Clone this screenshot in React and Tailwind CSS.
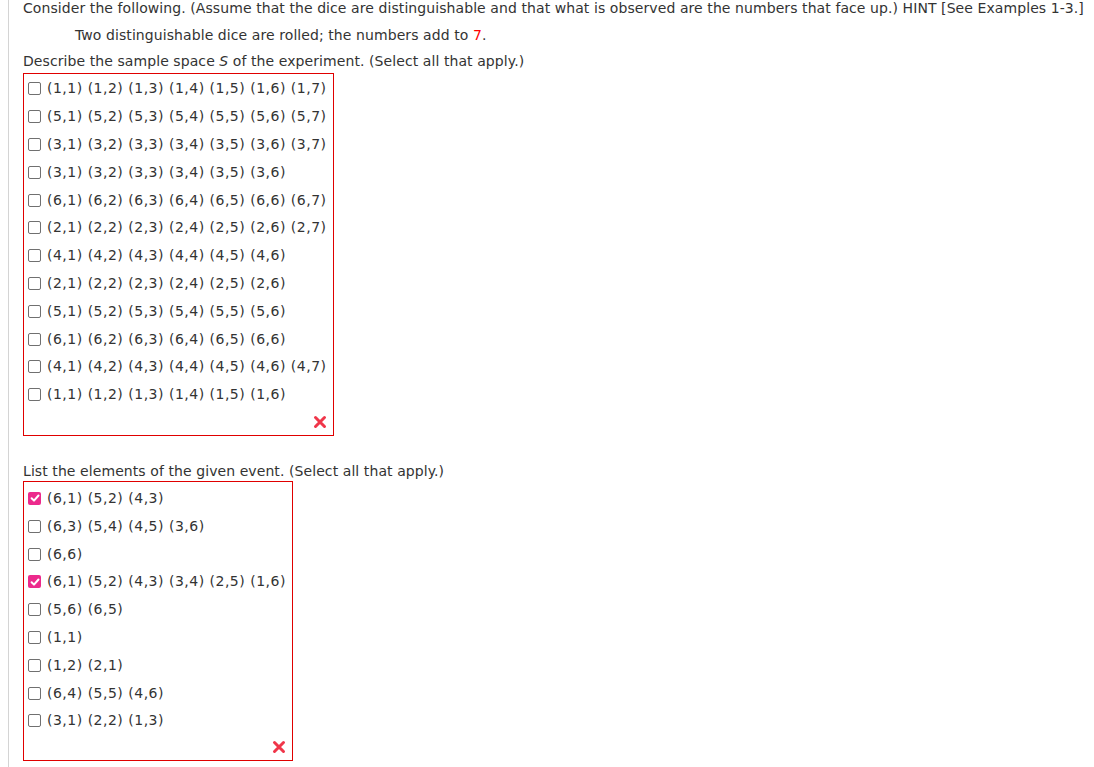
import React from 'react';

const sampleRows = [
    '(1,1) (1,2) (1,3) (1,4) (1,5) (1,6) (1,7)',
    '(5,1) (5,2) (5,3) (5,4) (5,5) (5,6) (5,7)',
    '(3,1) (3,2) (3,3) (3,4) (3,5) (3,6) (3,7)',
    '(3,1) (3,2) (3,3) (3,4) (3,5) (3,6)',
    '(6,1) (6,2) (6,3) (6,4) (6,5) (6,6) (6,7)',
    '(2,1) (2,2) (2,3) (2,4) (2,5) (2,6) (2,7)',
    '(4,1) (4,2) (4,3) (4,4) (4,5) (4,6)',
    '(2,1) (2,2) (2,3) (2,4) (2,5) (2,6)',
    '(5,1) (5,2) (5,3) (5,4) (5,5) (5,6)',
    '(6,1) (6,2) (6,3) (6,4) (6,5) (6,6)',
    '(4,1) (4,2) (4,3) (4,4) (4,5) (4,6) (4,7)',
    '(1,1) (1,2) (1,3) (1,4) (1,5) (1,6)',
];

const eventRows = [
    { text: '(6,1) (5,2) (4,3)', checked: true },
    { text: '(6,3) (5,4) (4,5) (3,6)', checked: false },
    { text: '(6,6)', checked: false },
    { text: '(6,1) (5,2) (4,3) (3,4) (2,5) (1,6)', checked: true },
    { text: '(5,6) (6,5)', checked: false },
    { text: '(1,1)', checked: false },
    { text: '(1,2) (2,1)', checked: false },
    { text: '(6,4) (5,5) (4,6)', checked: false },
    { text: '(3,1) (2,2) (1,3)', checked: false },
];

const Box = ({ checked }) =>
    checked ? (
        <span className="w-[13px] h-[13px] rounded-[2px] bg-[#ec2a8c] flex items-center justify-center shrink-0">
            <svg width="10" height="10" viewBox="0 0 10 10">
                <path d="M1.6 5.3 L4 7.6 L8.5 2.5" fill="none" stroke="#fff" strokeWidth="2" strokeLinecap="round" strokeLinejoin="round" />
            </svg>
        </span>
    ) : (
        <span className="w-[13px] h-[13px] rounded-[2px] border border-[#707070] bg-white shrink-0" />
    );

const WrongMark = () => (
    <svg width="14" height="14" viewBox="0 0 14 14">
        <path d="M2.5 2.5 L11.5 11.5 M11.5 2.5 L2.5 11.5" stroke="#f0364a" strokeWidth="3" strokeLinecap="round" />
    </svg>
);

const Option = ({ text, checked }) => (
    <div className="h-[27.8px] flex items-center gap-[6px] pl-[4px]">
        <Box checked={checked} />
        <span className="whitespace-nowrap tracking-[0.5px]">{text}</span>
    </div>
);

export default function App() {
    return (
        <div className="min-h-[767px] bg-white text-[#333] text-[14px] leading-[17px] font-['DejaVu_Sans','Verdana',sans-serif]">
            <div className="ml-[8px] border-l border-[#d4d4d4] min-h-[767px] pl-[14px]">
                <p className="tracking-[0.08px]">
                    Consider the following. (Assume that the dice are distinguishable and that what is observed are the numbers that face up.) HINT [See Examples 1-3.]
                </p>
                <p className="mt-[10px] pl-[52px] tracking-[0.08px]">
                    Two distinguishable dice are rolled; the numbers add to <span className="text-[#ff0000]">7</span>.
                </p>
                <p className="mt-[9px] tracking-[0.08px]">
                    Describe the sample space <i>S</i> of the experiment. (Select all that apply.)
                </p>
                <div className="mt-[3px] w-[311px] border border-solid border-[#e00000] pt-[1px]">
                    {sampleRows.map((r, i) => (
                        <Option key={i} text={r} checked={false} />
                    ))}
                    <div className="h-[26px] flex items-center justify-end pr-[6px]">
                        <WrongMark />
                    </div>
                </div>
                <p className="mt-[27px] tracking-[0.08px]">List the elements of the given event. (Select all that apply.)</p>
                <div className="mt-[1px] w-[270px] border border-solid border-[#e00000] pt-[3px]">
                    {eventRows.map((r, i) => (
                        <Option key={i} text={r.text} checked={r.checked} />
                    ))}
                    <div className="h-[25px] flex items-center justify-end pr-[6px]">
                        <WrongMark />
                    </div>
                </div>
            </div>
        </div>
    );
}
